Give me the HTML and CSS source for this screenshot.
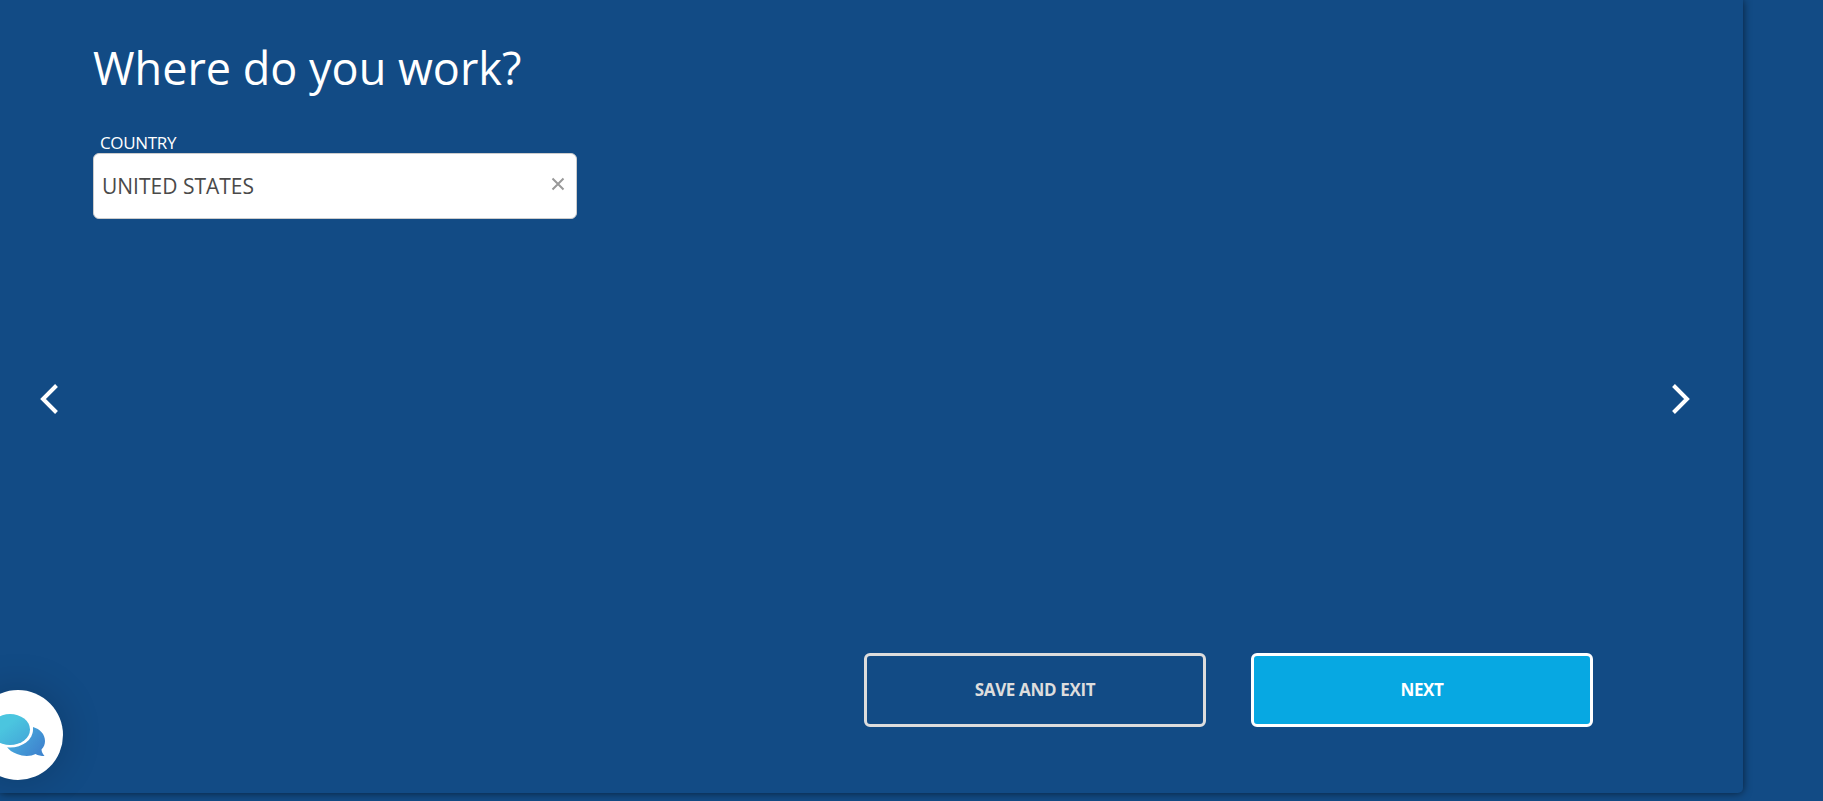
FILE: index.html
```html
<!DOCTYPE html>
<html lang="en">
<head>
<meta charset="utf-8">
<title>Where do you work?</title>
<link rel="stylesheet" href="styles.css">
</head>
<body>
<main class="panel">
  <button class="arrow arrow-prev" type="button" aria-label="Previous">
    <svg class="arrow-icon" width="24" height="36" viewBox="0 0 24 36"><path d="M19.500 4.500 6 18 19.500 31.500"/></svg>
  </button>
  <form class="step">
    <h1 class="title">Where do you work?</h1>
    <label class="label" for="country">COUNTRY</label>
    <div class="field">
      <input class="input" id="country" type="text" value="UNITED STATES">
      <button class="clear" type="button" aria-label="Clear country">
        <svg width="14" height="14" viewBox="0 0 14 14"><path d="M1.500 1.500 12.500 12.500M12.500 1.500 1.500 12.500"/></svg>
      </button>
    </div>
    <div class="actions">
      <button class="button button-outline" type="button">SAVE AND EXIT</button>
      <button class="button button-primary" type="submit">NEXT</button>
    </div>
  </form>
  <button class="arrow arrow-next" type="button" aria-label="Next question">
    <svg class="arrow-icon" width="24" height="36" viewBox="0 0 24 36"><path d="M4.500 4.500 18 18 4.500 31.500"/></svg>
  </button>
</main>
<button class="chat" type="button" aria-label="Open chat">
  <svg width="90" height="90" viewBox="0 0 90 90">
    <defs>
      <linearGradient id="front" x1="0" y1="0" x2="1" y2="1"><stop offset="0.4" stop-color="#4bc5df"/><stop offset="1" stop-color="#43a5d8"/></linearGradient>
      <linearGradient id="back" x1="0" y1="0" x2="1" y2="0.6"><stop offset="0.3" stop-color="#47a9dc"/><stop offset="1" stop-color="#3f86cf"/></linearGradient>
    </defs>
    <path fill="url(#back)" d="M60 37C67 39 72 44 72 51C72 54 71 57 68.500 59.500C68.500 62 70 64 71.500 66C68 66 65 65.500 62.500 64C58 66.500 50 66.500 44 64C39 62 36 60 34 57C48 57 60 49 60 37Z"/>
    <ellipse cx="37" cy="39.500" rx="23" ry="18" fill="#fff"/>
    <ellipse cx="37" cy="39.500" rx="20" ry="15.500" fill="url(#front)"/>
  </svg>
</button>
</body>
</html>
```
FILE: styles.css
```css
* {
  box-sizing: border-box;
}

body {
  min-height: 100vh;
  margin: 0;
  background: #124b85;
  color: #fff;
  font-family: "Open Sans", "Noto Sans", sans-serif;
}

button,
input {
  font: inherit;
}

button {
  padding: 0;
  border: 0;
  background: none;
  cursor: pointer;
}

svg {
  display: block;
}

.panel {
  display: grid;
  grid-template-columns: 93px 1fr 150px;
  min-height: calc(100vh - 8px);
  margin-right: 80px;
  border-radius: 0 0 5px 0;
  background: #124b85;
  box-shadow: 0 0 8px rgba(0, 0, 0, 0.6);
}

.arrow {
  display: flex;
  align-items: center;
  padding-top: 4px;
}

.arrow-prev {
  justify-content: flex-start;
  padding-left: 37px;
}

.arrow-next {
  justify-content: flex-end;
  padding-right: 50px;
}

.arrow-icon {
  flex: none;
  fill: none;
  stroke: #fff;
  stroke-width: 4;
}

.step {
  display: flex;
  flex-direction: column;
  align-items: flex-start;
  padding: 37px 0 66px;
}

.title {
  margin: 0 0 33px;
  font-size: 45px;
  font-weight: 400;
  line-height: 62px;
}

.label {
  padding-left: 7px;
  font-size: 17px;
  line-height: 21px;
  letter-spacing: -0.02em;
}

.field {
  position: relative;
  width: 484px;
  max-width: 100%;
}

.input {
  display: block;
  width: 100%;
  height: 66px;
  padding: 0 48px 0 8px;
  border: 1px solid #ccc;
  border-radius: 6px;
  background: #fff;
  color: #4a4a4a;
  font-size: 21px;
}

.clear {
  position: absolute;
  top: 24px;
  right: 12px;
}

.clear path {
  fill: none;
  stroke: #999;
  stroke-width: 2;
}

.actions {
  display: flex;
  align-self: flex-end;
  gap: 45px;
  margin-top: auto;
}

.button {
  width: 342px;
  height: 74px;
  padding-bottom: 2px;
  border: 3px solid;
  border-radius: 6px;
  font-size: 17px;
  font-weight: 700;
  letter-spacing: -0.02em;
}

.button-outline {
  border-color: #ddd;
  color: #ddd;
}

.button-primary {
  border-color: #fff;
  background: #07a8e2;
  color: #fff;
}

.chat {
  position: fixed;
  bottom: 21px;
  left: -27px;
  border-radius: 50%;
  background: #fff;
  box-shadow: 0 0 40px rgba(0, 0, 0, 0.2);
}
```
